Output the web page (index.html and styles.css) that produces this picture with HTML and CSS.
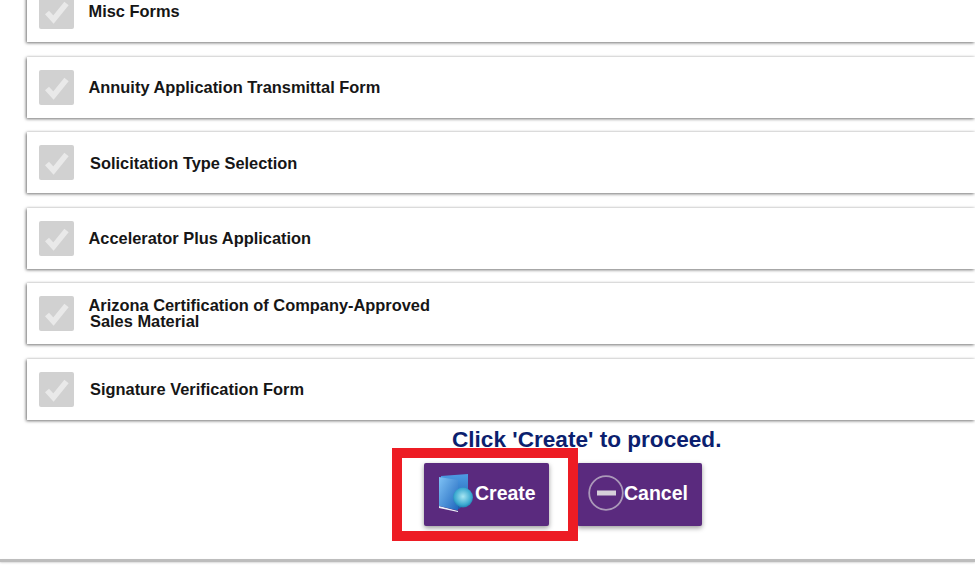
FILE: index.html
```html
<!DOCTYPE html>
<html lang="en">
<head>
<meta charset="utf-8">
<title>Forms</title>
<link rel="stylesheet" href="styles.css">
</head>
<body>
<main class="page">
  <ul class="forms">
    <li class="card"><span class="check"><svg viewBox="0 0 35 35"><path d="M8 18.500L14.500 25.500L27.500 9.500" /></svg></span><span class="name first">Misc Forms</span></li>
    <li class="card"><span class="check"><svg viewBox="0 0 35 35"><path d="M8 18.500L14.500 25.500L27.500 9.500" /></svg></span><span class="name">Annuity Application Transmittal Form</span></li>
    <li class="card"><span class="check"><svg viewBox="0 0 35 35"><path d="M8 18.500L14.500 25.500L27.500 9.500" /></svg></span><span class="name nudge">Solicitation Type Selection</span></li>
    <li class="card"><span class="check"><svg viewBox="0 0 35 35"><path d="M8 18.500L14.500 25.500L27.500 9.500" /></svg></span><span class="name">Accelerator Plus Application</span></li>
    <li class="card"><span class="check"><svg viewBox="0 0 35 35"><path d="M8 18.500L14.500 25.500L27.500 9.500" /></svg></span><span class="name two">Arizona Certification of Company-Approved<br><span class="nudge">Sales Material</span></span></li>
    <li class="card"><span class="check"><svg viewBox="0 0 35 35"><path d="M8 18.500L14.500 25.500L27.500 9.500" /></svg></span><span class="name nudge">Signature Verification Form</span></li>
  </ul>
  <p class="hint">Click 'Create' to proceed.</p>
  <div class="actions">
    <button class="btn create" type="button">
      <svg class="icon" viewBox="0 0 36 38">
        <defs>
          <linearGradient id="folder" x1="0" y1="0" x2="1" y2="1"><stop offset="0" stop-color="#7fc2f5"/><stop offset="1" stop-color="#1f66bd"/></linearGradient>
          <linearGradient id="back" x1="0" y1="0" x2="0" y2="1"><stop offset="0" stop-color="#4d9be3"/><stop offset="1" stop-color="#1c5cae"/></linearGradient>
          <radialGradient id="globe" cx=".5" cy=".45" r=".6"><stop offset="0" stop-color="#a8e6f2"/><stop offset=".7" stop-color="#3aa9d0"/><stop offset="1" stop-color="#176fa8"/></radialGradient>
        </defs>
        <path d="M1 32L20 37V38L1 34Z" fill="#eef3f9"/>
        <path d="M3 2L30 0V27L21 35L3 30Z" fill="url(#back)"/>
        <path d="M1 3L20 6V36.500L1 32Z" fill="url(#folder)"/>
        <circle cx="25" cy="23.500" r="10" fill="url(#globe)"/>
      </svg>
      <span>Create</span>
    </button>
    <button class="btn cancel" type="button">
      <svg class="icon" viewBox="0 0 36 36">
        <circle cx="18" cy="18" r="16.800" fill="none" stroke="#ab99b9" stroke-width="1.800"/>
        <rect x="9" y="15.500" width="19" height="5" fill="#d6cfda"/>
      </svg>
      <span>Cancel</span>
    </button>
    <div class="callout"></div>
  </div>
  <footer class="rule"></footer>
</main>
</body>
</html>
```

FILE: styles.css
```css
* { box-sizing: border-box; }
html, body { margin: 0; padding: 0; height: 583px; overflow: hidden; background: #fff; }
body { font-family: "Liberation Sans", Arial, sans-serif; }
.page { margin-top: -19px; }
.forms { list-style: none; margin: 0 0 0 27px; padding: 0; display: flex; flex-direction: column; gap: 14.600px; }
.card {
  height: 61px;
  display: flex;
  align-items: center;
  gap: 14.500px;
  padding-left: 12px;
  background: #fff;
  box-shadow: -1px 1px 3px rgba(0,0,0,.55), 0 -1px 2px rgba(0,0,0,.08);
}
.check { flex: none; width: 35px; height: 35px; border-radius: 2px; background: #d1d1d1; display: block; }
.check svg { display: block; width: 35px; height: 35px; }
.check path { fill: none; stroke: #e9e9e9; stroke-width: 5.500px; }
.name { font-size: 16.400px; font-weight: 700; color: #161616; padding-top: 1px; }
.first { padding-top: 0; }
.two { line-height: 16px; padding: 0 0 2px; }
.nudge { margin-left: 1.500px; }
.hint { margin: 8px 0 0 452px; font-size: 22.600px; line-height: 24px; font-weight: 700; color: #0c1f6f; }
.actions { position: relative; display: flex; gap: 28px; margin: 11px 0 0 424px; }
.btn {
  width: 125px;
  height: 63px;
  display: flex;
  align-items: center;
  border: 0;
  border-radius: 2px;
  background: #5a2a7e;
  color: #fff;
  font: 700 19.500px "Liberation Sans", Arial, sans-serif;
  box-shadow: 0 2px 5px rgba(0,0,0,.4);
}
.create { padding: 0 0 2px 14px; gap: 1px; }
.cancel { padding: 0 0 2px 11px; gap: 0; }
.create .icon { width: 36px; height: 38px; flex: none; }
.cancel .icon { width: 36px; height: 36px; flex: none; }
.callout { position: absolute; left: -32px; top: -15px; width: 186px; height: 93px; border: 10px solid #ed1c24; pointer-events: none; }
.rule { margin-top: 33px; height: 3px; background: #bdbdbd; box-shadow: 0 1px 2px rgba(0,0,0,.15); }
```
